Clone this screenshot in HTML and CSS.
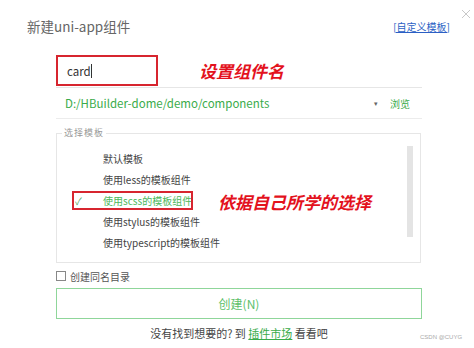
FILE: index.html
```html
<!DOCTYPE html>
<html lang="zh-CN">
<head>
    <meta charset="UTF-8">
    <meta name="viewport" content="width=device-width, initial-scale=1.0">
    <title>新建uni-app组件</title>
    <link rel="stylesheet" href="styles.css">
</head>
<body>
    <div class="dialog">
        <svg class="close" width="10" height="10" viewBox="0 0 10 10">
            <path d="M1 1L9 9M9 1L1 9" stroke="#c8c8c8" stroke-width="1" fill="none"/>
        </svg>
        <div class="header">
            <div class="title">新建uni-app组件</div>
            <a class="custom-link" href="#">[自定义模板]</a>
        </div>
        <div class="form">
            <div class="name-row">
                <div class="name-input">card<span class="caret"></span></div>
                <div class="note note-name">设置组件名</div>
            </div>
            <div class="path-row">
                <span class="path">D:/HBuilder-dome/demo/components</span>
                <span class="arrow">▾</span>
                <span class="browse">浏览</span>
            </div>
            <div class="group">
                <div class="legend">选择模板</div>
                <div class="list">
                    <div class="item">默认模板</div>
                    <div class="item">使用less的模板组件</div>
                    <div class="item selected">
                        <span class="check">✓</span>使用scss的模板组件
                        <div class="note note-choice">依据自己所学的选择</div>
                    </div>
                    <div class="item">使用stylus的模板组件</div>
                    <div class="item">使用typescript的模板组件</div>
                </div>
                <div class="scrollbar"></div>
            </div>
            <label class="same-dir"><span class="box"></span>创建同名目录</label>
            <button class="create">创建(N)</button>
            <div class="footer">没有找到想要的? 到 <a href="#">插件市场</a> 看看吧</div>
        </div>
        <div class="watermark">CSDN @CUYG</div>
    </div>
</body>
</html>
```

FILE: styles.css
```css
body {
    margin: 0;
    background: #fff;
    font-family: "Noto Sans CJK SC", "Microsoft YaHei", sans-serif;
}
.dialog {
    position: relative;
    width: 474px;
    height: 348px;
    overflow: hidden;
}
.close {
    position: absolute;
    top: 9px;
    left: 461px;
}
.header {
    display: flex;
    align-items: center;
    justify-content: space-between;
    height: 52px;
    padding: 0 24px 0 27px;
}
.title {
    font-size: 13.5px;
    color: #666;
}
.custom-link {
    font-size: 10px;
    color: #2b5fc4;
    text-decoration: underline;
}
.form {
    display: flex;
    flex-direction: column;
    width: 366px;
    margin-left: 56px;
}
.name-row {
    display: flex;
    align-items: flex-start;
    height: 32px;
    margin-top: 3px;
    border-bottom: 1px solid #e6e6e6;
}
.name-input {
    display: flex;
    align-items: center;
    box-sizing: border-box;
    width: 102px;
    height: 31px;
    padding-left: 9px;
    border: 2px solid #d7252f;
    font-size: 11.5px;
    color: #333;
}
.caret {
    display: inline-block;
    width: 1px;
    height: 14px;
    background: #333;
}
.note {
    font-size: 17px;
    font-weight: bold;
    font-style: italic;
    color: #e3121d;
    white-space: nowrap;
}
.note-name {
    margin-left: 41px;
    margin-top: 3px;
}
.path-row {
    display: flex;
    align-items: center;
    height: 30px;
    padding: 0 12px 0 9px;
    border-bottom: 1px solid #ececec;
    font-size: 11.5px;
    color: #3aab4a;
}
.path {
    flex: 1;
}
.arrow {
    font-size: 7px;
    color: #666;
    margin-right: 12px;
}
.browse {
    font-size: 10px;
}
.group {
    position: relative;
    box-sizing: border-box;
    width: 365px;
    height: 130px;
    margin-top: 14px;
    border: 1px solid #e6e6e6;
}
.legend {
    position: absolute;
    top: -8px;
    left: 5px;
    padding: 0 2px;
    background: #fff;
    font-size: 9px;
    color: #999;
    letter-spacing: 1px;
}
.list {
    display: flex;
    flex-direction: column;
    padding-top: 14px;
}
.item {
    position: relative;
    display: flex;
    align-items: center;
    height: 21px;
    padding-left: 46px;
    font-size: 10px;
    color: #444;
}
.item.selected {
    color: #4cb85a;
}
.item.selected::before {
    content: "";
    position: absolute;
    left: 15px;
    top: 1px;
    width: 121px;
    height: 19px;
    box-sizing: border-box;
    border: 2px solid #d7252f;
}
.check {
    position: absolute;
    left: 18px;
    font-size: 10px;
    color: #5aa865;
}
.note-choice {
    position: absolute;
    left: 161px;
    top: -1px;
}
.scrollbar {
    position: absolute;
    top: 12px;
    left: 350px;
    width: 6px;
    height: 91px;
    background: #e4e4e4;
}
.same-dir {
    display: flex;
    align-items: center;
    height: 16px;
    margin-top: 5px;
    font-size: 10px;
    color: #555;
}
.box {
    box-sizing: border-box;
    width: 10px;
    height: 10px;
    margin-right: 4px;
    border: 1px solid #888;
}
.create {
    height: 31px;
    margin-top: 4px;
    border: 1px solid #8fd69a;
    background: #fff;
    font-family: inherit;
    font-size: 12px;
    color: #5cc06a;
}
.footer {
    margin-top: 6px;
    text-align: center;
    font-size: 11px;
    color: #444;
}
.footer a {
    color: #3aab4a;
    text-decoration: underline;
}
.watermark {
    position: absolute;
    left: 420px;
    top: 334px;
    font-family: "Liberation Sans", sans-serif;
    font-size: 6px;
    color: #aaa;
}
```
